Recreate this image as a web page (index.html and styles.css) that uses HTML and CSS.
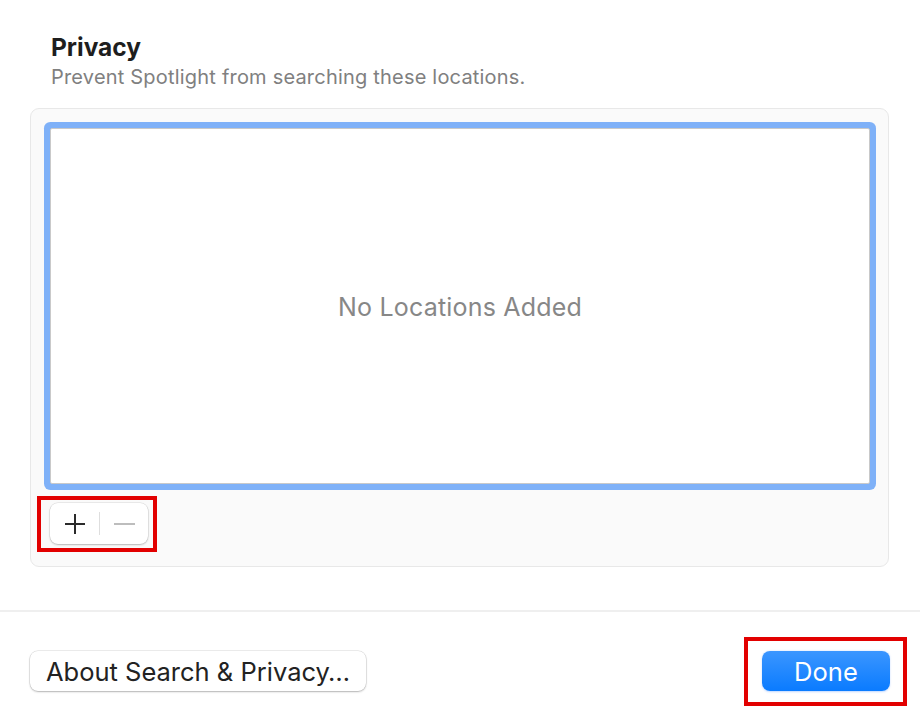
FILE: index.html
```html
<!DOCTYPE html>
<html lang="en">
<head>
    <meta charset="UTF-8">
    <meta name="viewport" content="width=device-width, initial-scale=1.0">
    <title>Spotlight Privacy</title>
    <link rel="stylesheet" href="styles.css">
</head>
<body>
    <div class="sheet">
        <div class="header">
            <h1 class="title">Privacy</h1>
            <p class="subtitle">Prevent Spotlight from searching these locations.</p>
        </div>

        <div class="panel">
            <div class="list">
                <span class="empty">No Locations Added</span>
            </div>
            <div class="tools marked">
                <button class="tool" type="button" aria-label="Add">
                    <svg width="22" height="22" viewBox="0 0 22 22">
                        <path d="M11 1v20M1 11h20" stroke="#2b2b2b" stroke-width="2" fill="none"/>
                    </svg>
                </button>
                <span class="divider"></span>
                <button class="tool" type="button" aria-label="Remove" disabled>
                    <svg width="22" height="22" viewBox="0 0 22 22">
                        <path d="M1 11h21" stroke="#bdbdbd" stroke-width="2" fill="none"/>
                    </svg>
                </button>
            </div>
        </div>

        <div class="separator"></div>

        <div class="footer">
            <button class="btn btn-about" type="button">About Search &amp; Privacy…</button>
            <div class="done-wrap marked">
                <button class="btn btn-primary" type="button">Done</button>
            </div>
        </div>
    </div>
</body>
</html>
```

FILE: styles.css
```css
body {
    margin: 0;
    background-color: #fff;
    font-family: Inter, "Noto Sans", "Liberation Sans", sans-serif;
    color: #222;
}

.sheet {
    min-height: 726px;
}

.header {
    padding: 32px 51px 0;
}

.title {
    margin: 0;
    font-size: 24.5px;
    line-height: 30px;
    font-weight: 700;
    color: #1e1e1e;
}

.subtitle {
    margin: 4px 0 0;
    font-size: 20px;
    line-height: 22px;
    letter-spacing: 0.2px;
    color: #808080;
}

.panel {
    margin: 20px 31px 0 30px;
    padding: 19px 18px 22px 19px;
    background-color: #fafafa;
    border: 1px solid #e8e8e8;
    border-radius: 9px;
}

.list {
    height: 356px;
    box-sizing: border-box;
    background-color: #fff;
    border: 1px solid #c9c9c9;
    border-radius: 2px;
    box-shadow: 0 0 0 6px #7fb1f8;
    display: flex;
    align-items: center;
    justify-content: center;
}

.empty {
    font-size: 25px;
    letter-spacing: 0.2px;
    color: #878787;
    margin-top: 2px;
}

.tools {
    margin-top: 19px;
    width: 98px;
    height: 41px;
    box-sizing: border-box;
    background-color: #fff;
    border-radius: 8px;
    box-shadow: 0 0 0 0.5px rgba(0, 0, 0, 0.12), 0 1px 2px rgba(0, 0, 0, 0.22);
    display: flex;
    align-items: center;
    justify-content: space-between;
    padding: 0 4px;
}

.tool {
    width: 41px;
    height: 41px;
    padding: 0;
    border: none;
    background: none;
    display: flex;
    align-items: center;
    justify-content: center;
}

.divider {
    width: 1px;
    height: 23px;
    background-color: #dedede;
}

.separator {
    margin-top: 43px;
    height: 2px;
    background-color: #efefef;
}

.footer {
    padding: 39px 30px 34px;
    display: flex;
    justify-content: space-between;
}

.btn {
    height: 40px;
    padding: 0;
    border: none;
    border-radius: 8px;
    background-color: #fff;
    box-shadow: 0 0 0 0.5px rgba(0, 0, 0, 0.14), 0 1px 2px rgba(0, 0, 0, 0.24);
    font-family: inherit;
    font-size: 25.5px;
    color: #222;
}

.btn-about {
    width: 336px;
}

.btn-primary {
    display: block;
    width: 128px;
    color: #fff;
    letter-spacing: 0.15px;
    background: linear-gradient(#3b96ff, #0a7bff);
    box-shadow: 0 0.5px 2px rgba(0, 100, 255, 0.25);
}

/* red annotation frames */
.marked {
    position: relative;
}

.marked::after {
    content: '';
    position: absolute;
    border: 4px solid #e20000;
    pointer-events: none;
}

.tools.marked::after {
    left: -13px;
    right: -9px;
    top: -7px;
    bottom: -8px;
}

.done-wrap.marked::after {
    left: -18px;
    right: -17px;
    top: -14px;
    bottom: -15px;
}
```
